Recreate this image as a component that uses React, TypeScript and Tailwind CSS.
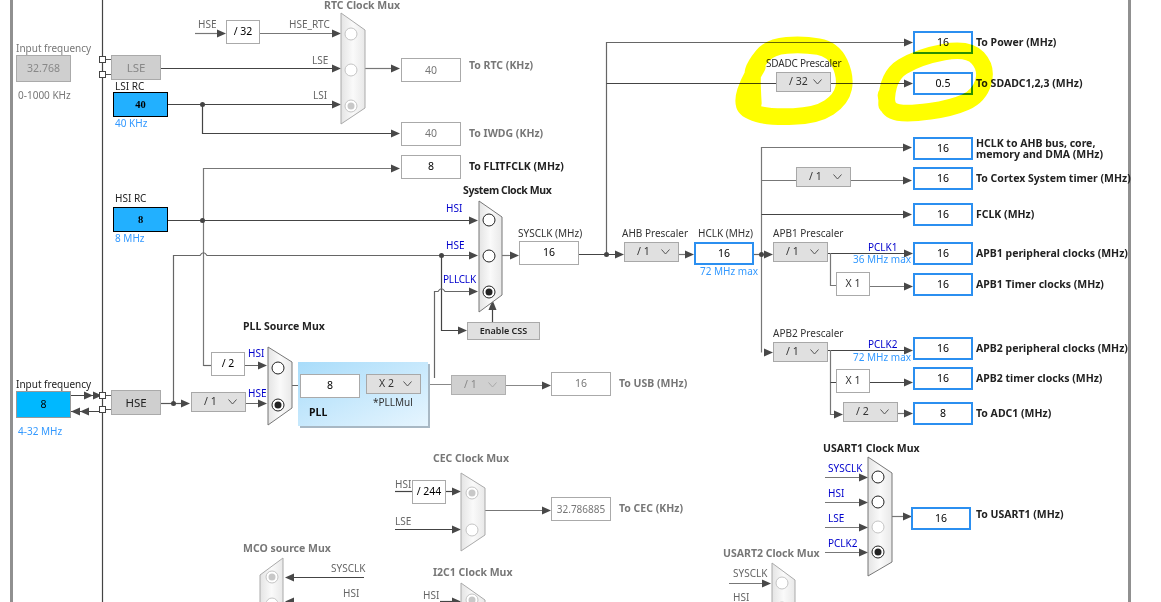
import type { ReactNode } from "react";

// wires: [path, colour]
const wires: [string, string][] = [
  ["M102.5 0V602", "#444"],
  // RTC
  ["M195 33.5H218", "#777"],
  ["M259 33.5H332", "#777"],
  ["M161 68.5H332", "#444"],
  ["M168 104.5H332M202.5 104.5V133.5H392", "#444"],
  ["M365 68.5H392", "#777"],
  ["M203.5 366V168.5H392", "#777"],
  // HSI / HSE
  ["M168 220.5H469", "#444"],
  ["M173.5 403V255.5H200Q203.5 250 207 255.5H469", "#666"],
  ["M441.5 255.5V330.5H458", "#444"],
  ["M434.5 378V291.5H438Q441.5 286 445 291.5H469", "#666"],
  ["M492.5 322V310", "#444"],
  ["M71 395.5H102M71 411.5H102", "#444"],
  ["M105 395.5H111M105 409.5H111", "#555"],
  ["M105 59.5H111M105 74.5H111", "#555"],
  ["M161 403.5H182", "#555"],
  ["M203.5 365.5H211", "#666"],
  ["M244 365.5H259M246 403.5H259", "#666"],
  ["M292 385.5H300M359 385.5H366", "#666"],
  ["M423 384.5H451M506 385.5H543", "#888"],
  // system clock
  ["M502 255.5H510", "#777"],
  ["M579 254.5H615", "#444"],
  ["M606.5 254V42.5H904", "#666"],
  ["M606.5 83.5H776M830 83.5H904", "#444"],
  ["M679 254.5H686", "#777"],
  ["M753 254.5H765", "#666"],
  ["M761.5 352.5V147.5H904", "#777"],
  ["M761.5 180.5H796M851 180.5H904", "#777"],
  ["M761.5 214.5H904", "#444"],
  ["M828 253.5H904", "#444"],
  ["M830.5 253V285.5H836", "#777"],
  ["M869 286.5H904", "#777"],
  ["M828 350.5H904", "#444"],
  ["M830.5 350V414.5H835", "#777"],
  ["M830.5 382.5H836M869 382.5H904", "#444"],
  ["M898 413.5H904", "#777"],
  // lower muxes
  ["M395 491.5H412", "#444"],
  ["M446 491.5H452", "#444"],
  ["M395 529.5H452", "#444"],
  ["M485 510.5H542", "#777"],
  ["M825 477.5H860M825 502.5H860M825 527.5H860", "#777"],
  ["M825 552.5H860", "#777"],
  ["M892 516.5H903", "#777"],
  ["M729 583.5H763", "#777"],
  ["M440 601.5H452", "#444"],
  ["M364 577.5H292", "#444"],
];

// arrow tips pointing right
const arrows = [
  [226, 33], [341, 33], [341, 68], [341, 104], [400, 68], [400, 133], [400, 168],
  [478, 220], [478, 255], [478, 291], [467, 330], [93, 395], [102, 395], [190, 403], [267, 365], [267, 403],
  [519, 255], [624, 254], [694, 254], [773, 254], [913, 42], [913, 83], [912, 147], [912, 180], [912, 214],
  [913, 253], [913, 286], [773, 352], [913, 350], [913, 382], [843, 414], [913, 413], [461, 491], [461, 529],
  [551, 510], [868, 477], [868, 502], [868, 527], [868, 552], [912, 516], [771, 583], [461, 601], [551, 385],
];

const leftArrows = [[71, 411], [80, 411], [285, 577], [285, 601]];

const dots = [[202.5, 104.5], [202.5, 220.5], [173.5, 403.5], [441.5, 255.5], [606.5, 254.5], [761.5, 254.5]];

const squares = [[99, 56], [99, 71], [99, 392], [99, 406]];

type Mux = { p: string; on: boolean; c: [number, number, 0 | 1][] };

const muxes: Mux[] = [
  { p: "341,13 365,30 365,108 341,124", on: false, c: [[351, 34, 0], [351, 70, 0], [351, 106, 1]] },
  { p: "479,201 502,217 502,295 479,312", on: true, c: [[489, 220, 0], [489, 256, 0], [489, 292, 1]] },
  { p: "268,347 292,362 292,408 268,425", on: true, c: [[278, 368, 0], [278, 405, 1]] },
  { p: "461,473 485,488 485,535 461,551", on: false, c: [[472, 493, 1], [472, 530, 0]] },
  { p: "868,457 892,473 892,562 868,576", on: true, c: [[878, 477, 0], [878, 502, 0], [878, 552, 1]] },
  { p: "461,583 485,600 485,640 461,660", on: false, c: [[472, 600, 1]] },
  { p: "283,558 260,575 260,640 283,660", on: false, c: [[272, 577, 1], [272, 604, 0]] },
  { p: "772,563 795,580 795,640 772,660", on: false, c: [[782, 583, 0], [782, 608, 0]] },
];

function Label({ className, children }: { className: string; children: ReactNode }) {
  return <div className={`absolute whitespace-nowrap text-[10px] leading-[14px] ${className}`}>{children}</div>;
}

function Title({ className, children }: { className: string; children: ReactNode }) {
  return <div className={`absolute whitespace-nowrap text-[10.5px] leading-[14px] font-bold ${className}`}>{children}</div>;
}

function Box({ className, children }: { className: string; children: ReactNode }) {
  return <div className={`absolute flex items-center justify-center border text-[10.5px] ${className}`}>{children}</div>;
}

// blue framed value with its caption on the right
function Output({ className, value, children }: { className: string; value: string; children: ReactNode }) {
  return (
    <div className={`absolute flex items-center gap-[3px] ${className}`}>
      <div className="flex h-[23px] w-[60px] items-center justify-center border-2 border-[#2b8ff0] bg-white text-[10.5px] text-black">{value}</div>
      <div className="whitespace-nowrap text-[10.5px] font-bold leading-[11px] text-[#222]">{children}</div>
    </div>
  );
}

// grey framed value with a caption, used by the gated outputs
function Tap({ className, value, muted, raised, children }: { className: string; value: string; muted?: boolean; raised?: boolean; children: ReactNode }) {
  return (
    <div className={`absolute flex items-center gap-[8px] ${className}`}>
      <div className={`flex h-[24px] w-[60px] items-center justify-center border border-[#aaa] bg-white ${value.length > 4 ? "text-[10px]" : "text-[10.5px]"} ${muted ? "text-[#777]" : "text-black"}`}>{value}</div>
      <div className={`whitespace-nowrap text-[10.5px] font-bold ${raised ? "mb-[9px]" : ""} ${muted ? "text-[#777]" : "text-[#222]"}`}>{children}</div>
    </div>
  );
}

function Select({ className, children, off }: { className: string; children: ReactNode; off?: boolean }) {
  return (
    <div className={`absolute flex h-[20px] w-[55px] items-center justify-between border pl-[12px] pr-[8px] text-[10.5px] ${off ? "border-[#b0b0b0] bg-[#d0d0d0] text-[#888]" : "border-[#a8a8a8] bg-[#e0e0e0] text-[#333]"} ${className}`}>
      <span>{children}</span>
      <svg width="9" height="6" viewBox="0 0 9 6" fill="none" stroke={off ? "#aaa" : "#555"}>
        <path d="M.5 .5L4.5 5L8.5 .5" />
      </svg>
    </div>
  );
}

// frequency source: caption, coloured box, range below
function Source({ className, title, value, range, box, titleColor, rangeColor }: { className: string; title: string; value: string; range: string; box: string; titleColor: string; rangeColor: string }) {
  return (
    <div className={`absolute flex flex-col ${className}`}>
      <div className={`whitespace-nowrap text-[10px] leading-[14px] ${titleColor}`}>{title}</div>
      <div className={`flex h-[27px] w-[55px] items-center justify-center border text-[10.5px] ${box}`}>{value}</div>
      <div className={`ml-[2px] mt-[6px] whitespace-nowrap text-[10px] leading-[14px] ${rangeColor}`}>{range}</div>
    </div>
  );
}

// smooth line through the points, for the marker scribbles
function smooth(pts: number[][]) {
  let d = `M${pts[0][0]} ${pts[0][1]}`;
  for (let i = 1; i < pts.length - 1; i++) {
    const mx = (pts[i][0] + pts[i + 1][0]) / 2;
    const my = (pts[i][1] + pts[i + 1][1]) / 2;
    d += `Q${pts[i][0]} ${pts[i][1]} ${mx} ${my}`;
  }
  const last = pts[pts.length - 1];
  return `${d}L${last[0]} ${last[1]}`;
}

const scribbleA = [[100, 250], [95, 170], [105, 135], [150, 80], [250, 72], [340, 88], [378, 170], [364, 238], [290, 287], [150, 292], [78, 272], [68, 240], [84, 190], [112, 140]];
const scribbleB = [[500, 255], [498, 170], [598, 110], [745, 83], [802, 145], [778, 228], [695, 265], [565, 283], [505, 272], [498, 225]];

export default function App() {
  return (
    <div className="relative h-[602px] w-[1161px] overflow-hidden bg-white font-['Noto_Sans','Liberation_Sans',sans-serif] text-[#222]">
      {/* frame */}
      <div className="absolute bottom-0 left-[10px] top-0 w-[3px] bg-[#909090]" />
      <div className="absolute bottom-0 left-[1128px] top-0 w-[3px] bg-[#909090]" />

      <svg className="absolute left-0 top-0 h-[602px] w-[1161px]" viewBox="0 0 1161 602" fill="none">
        <defs>
          <linearGradient id="mux" x1="0" x2="1" y1="0" y2="0">
            <stop offset="0" stopColor="#e4e4e4" />
            <stop offset="0.5" stopColor="#fafafa" />
            <stop offset="1" stopColor="#e8e8e8" />
          </linearGradient>
        </defs>
        {wires.map(([d, c], i) => (
          <path key={i} d={d} stroke={c} strokeWidth="1.2" />
        ))}
        {arrows.map(([x, y], i) => (
          <path key={i} d={`M${x} ${y + 0.5}L${x - 9} ${y - 3.5}V${y + 4.5}Z`} fill="#484848" />
        ))}
        {leftArrows.map(([x, y], i) => (
          <path key={i} d={`M${x} ${y + 0.5}L${x + 9} ${y - 3.5}V${y + 4.5}Z`} fill="#484848" />
        ))}
        <path d="M492.5 300L488.5 310H496.5Z" fill="#484848" />
        {dots.map(([x, y], i) => (
          <circle key={i} cx={x} cy={y} r="2.5" fill="#444" />
        ))}
        {squares.map(([x, y], i) => (
          <rect key={i} x={x + 0.5} y={y + 0.5} width="6" height="6" fill="white" stroke="#444" />
        ))}
        {muxes.map((m, i) => (
          <g key={i}>
            <polygon points={m.p} fill="url(#mux)" stroke={m.on ? "#777" : "#aaa"} />
            {m.c.map(([x, y, sel], j) => (
              <g key={j}>
                <circle cx={x} cy={y} r="6" fill="white" stroke={m.on ? "#222" : "#c4c4c4"} />
                {sel === 1 && <circle cx={x} cy={y} r="3.5" fill={m.on ? "#222" : "#c8c8c8"} />}
              </g>
            ))}
          </g>
        ))}
        <circle cx="878" cy="527" r="6" fill="white" stroke="#c4c4c4" />
      </svg>

      {/* sources */}
      <Source className="left-[16px] top-[41px]" title="Input frequency" value="32.768" range="0-1000 KHz" box="border-[#aaa] bg-[#cfcfcf] text-[#888]" titleColor="text-[#777]" rangeColor="text-[#777]" />
      <Source className="left-[16px] top-[377px]" title="Input frequency" value="8" range="4-32 MHz" box="border-[#999] bg-[#00b8ff] text-black" titleColor="text-[#222]" rangeColor="text-[#3399ff]" />
      <Box className="left-[111px] top-[55px] h-[25px] w-[50px] border-[#aaa] bg-[#cfcfcf] text-[11.5px] text-[#888]">LSE</Box>
      <Label className="left-[115px] top-[79px] text-[#222]">LSI RC</Label>
      <Box className="left-[113px] top-[92px] h-[25px] w-[55px] border-black bg-[#22b0ff] font-['Liberation_Serif',serif] font-bold text-black">40</Box>
      <Label className="left-[115px] top-[116px] text-[#3399ff]">40 KHz</Label>
      <Label className="left-[115px] top-[191px] text-[#222]">HSI RC</Label>
      <Box className="left-[113px] top-[207px] h-[25px] w-[55px] border-black bg-[#22b0ff] font-['Liberation_Serif',serif] font-bold text-black">8</Box>
      <Label className="left-[115px] top-[231px] text-[#3399ff]">8 MHz</Label>
      <Box className="left-[111px] top-[390px] h-[25px] w-[50px] border-[#aaa] bg-[#cfcfcf] text-[11.5px] text-[#222]">HSE</Box>

      {/* RTC */}
      <div className="absolute left-[324px] top-0 whitespace-nowrap text-[10.5px] font-bold leading-[10px] text-[#777]">RTC Clock Mux</div>
      <Label className="left-[198px] top-[17px] text-[#666]">HSE</Label>
      <Box className="left-[226px] top-[20px] h-[24px] w-[34px] border-[#aaa] bg-white text-black">/ 32</Box>
      <Label className="left-[289px] top-[17px] text-[#666]">HSE_RTC</Label>
      <Label className="left-[312px] top-[53px] text-[#666]">LSE</Label>
      <Label className="left-[313px] top-[88px] text-[#666]">LSI</Label>
      <Tap className="left-[401px] top-[58px]" value="40" muted raised>To RTC (KHz)</Tap>
      <Tap className="left-[401px] top-[122px]" value="40" muted>To IWDG (KHz)</Tap>
      <Tap className="left-[401px] top-[155px]" value="8">To FLITFCLK (MHz)</Tap>

      {/* PLL */}
      <Title className="left-[243px] top-[319px] text-[#222]">PLL Source Mux</Title>
      <Box className="left-[211px] top-[352px] h-[24px] w-[34px] border-[#aaa] bg-white text-black">/ 2</Box>
      <Label className="left-[248px] top-[346px] text-[#0000cc]">HSI</Label>
      <Label className="left-[248px] top-[386px] text-[#0000cc]">HSE</Label>
      <Select className="left-[191px] top-[392px]">/ 1</Select>
      <div className="absolute left-[298px] top-[362px] h-[64px] w-[130px] bg-gradient-to-br from-[#a8dcfa] to-[#e6f5fe] shadow-[2px_2px_0_#a8b8c4]" />
      <Box className="left-[300px] top-[374px] h-[24px] w-[60px] border-[#aaa] bg-white text-black">8</Box>
      <Select className="left-[366px] top-[374px]">X 2</Select>
      <Label className="left-[373px] top-[395px] text-[#333]">*PLLMul</Label>
      <Title className="left-[309px] top-[405px] text-[#111]">PLL</Title>
      <Select off className="left-[451px] top-[375px]">/ 1</Select>
      <Tap className="left-[551px] top-[372px]" value="16" muted>To USB (MHz)</Tap>

      {/* system clock */}
      <Title className="left-[463px] top-[183px] tracking-[-0.4px] text-[#222]">System Clock Mux</Title>
      <Label className="left-[446px] top-[201px] text-[#0000cc]">HSI</Label>
      <Label className="left-[446px] top-[238px] text-[#0000cc]">HSE</Label>
      <Label className="left-[443px] top-[272px] tracking-[-0.2px] text-[#0000cc]">PLLCLK</Label>
      <Box className="left-[467px] top-[322px] h-[18px] w-[73px] border-[#aaa] bg-[#e0e0e0] font-semibold text-[#222]"><span className="text-[9px]">Enable CSS</span></Box>
      <Label className="left-[518px] top-[226px] text-[#333]">SYSCLK (MHz)</Label>
      <Box className="left-[519px] top-[241px] h-[24px] w-[60px] border-[#aaa] bg-white text-black">16</Box>
      <Label className="left-[622px] top-[226px] text-[#333]">AHB Prescaler</Label>
      <Select className="left-[624px] top-[242px]">/ 1</Select>
      <Label className="left-[698px] top-[226px] text-[#333]">HCLK (MHz)</Label>
      <div className="absolute left-[694px] top-[242px] flex h-[23px] w-[60px] items-center justify-center border-2 border-[#2b8ff0] bg-white text-[10.5px] text-black">16</div>
      <Label className="left-[700px] top-[264px] text-[#3399ff]">72 MHz max</Label>

      {/* outputs */}
      <Label className="left-[766px] top-[56px] tracking-[-0.2px] text-[#333]">SDADC Prescaler</Label>
      <Select className="left-[776px] top-[72px]">/ 32</Select>
      <Select className="left-[796px] top-[167px]">/ 1</Select>
      <Output className="left-[913px] top-[31px]" value="16">To Power (MHz)</Output>
      <Output className="left-[913px] top-[72px]" value="0.5">To SDADC1,2,3 (MHz)</Output>
      <Output className="left-[913px] top-[137px]" value="16">HCLK to AHB bus, core,<br />memory and DMA (MHz)</Output>
      <Output className="left-[913px] top-[167px]" value="16">To Cortex System timer (MHz)</Output>
      <Output className="left-[913px] top-[203px]" value="16">FCLK (MHz)</Output>

      <Label className="left-[773px] top-[226px] text-[#333]">APB1 Prescaler</Label>
      <Select className="left-[773px] top-[242px]">/ 1</Select>
      <Label className="left-[868px] top-[240px] text-[#0000cc]">PCLK1</Label>
      <Label className="left-[853px] top-[252px] text-[#3399ff]">36 MHz max</Label>
      <Output className="left-[913px] top-[242px]" value="16">APB1 peripheral clocks (MHz)</Output>
      <Box className="left-[836px] top-[272px] h-[24px] w-[34px] border-[#aaa] bg-white text-[#333]">X 1</Box>
      <Output className="left-[913px] top-[273px]" value="16">APB1 Timer clocks (MHz)</Output>

      <Label className="left-[773px] top-[326px] text-[#333]">APB2 Prescaler</Label>
      <Select className="left-[773px] top-[342px]">/ 1</Select>
      <Label className="left-[868px] top-[337px] text-[#0000cc]">PCLK2</Label>
      <Label className="left-[853px] top-[350px] text-[#3399ff]">72 MHz max</Label>
      <Output className="left-[913px] top-[337px]" value="16">APB2 peripheral clocks (MHz)</Output>
      <Box className="left-[836px] top-[369px] h-[24px] w-[34px] border-[#aaa] bg-white text-[#333]">X 1</Box>
      <Output className="left-[913px] top-[367px]" value="16">APB2 timer clocks (MHz)</Output>
      <Select className="left-[843px] top-[402px]">/ 2</Select>
      <Output className="left-[913px] top-[402px]" value="8">To ADC1 (MHz)</Output>

      {/* bottom muxes */}
      <Title className="left-[433px] top-[451px] text-[#777]">CEC Clock Mux</Title>
      <Label className="left-[395px] top-[477px] text-[#666]">HSI</Label>
      <Box className="left-[412px] top-[480px] h-[24px] w-[34px] border-[#aaa] bg-white text-black">/ 244</Box>
      <Label className="left-[395px] top-[514px] text-[#666]">LSE</Label>
      <Tap className="left-[551px] top-[497px]" value="32.786885" muted>To CEC (KHz)</Tap>
      <Title className="left-[433px] top-[565px] text-[#777]">I2C1 Clock Mux</Title>
      <Label className="left-[423px] top-[588px] text-[#666]">HSI</Label>
      <Title className="left-[243px] top-[541px] text-[#777]">MCO source Mux</Title>
      <Label className="left-[331px] top-[561px] text-[#666]">SYSCLK</Label>
      <Label className="left-[343px] top-[586px] text-[#666]">HSI</Label>
      <Title className="left-[823px] top-[441px] text-[#222]">USART1 Clock Mux</Title>
      <Label className="left-[828px] top-[461px] text-[#0000cc]">SYSCLK</Label>
      <Label className="left-[828px] top-[486px] text-[#0000cc]">HSI</Label>
      <Label className="left-[828px] top-[511px] text-[#0000cc]">LSE</Label>
      <Label className="left-[828px] top-[536px] text-[#0000cc]">PCLK2</Label>
      <div className="absolute left-[911px] top-[507px] flex items-center gap-[5px]">
        <div className="flex h-[23px] w-[60px] items-center justify-center border-2 border-[#2b8ff0] bg-white text-[10.5px] text-black">16</div>
        <div className="mb-[7px] whitespace-nowrap text-[10.5px] font-bold text-[#222]">To USART1 (MHz)</div>
      </div>
      <Title className="left-[723px] top-[546px] text-[#777]">USART2 Clock Mux</Title>
      <Label className="left-[733px] top-[566px] text-[#666]">SYSCLK</Label>
      <div className="absolute left-[733px] top-[593px] whitespace-nowrap text-[10px] leading-[9px] text-[#666]">HSI</div>

      {/* highlighter marks */}
      <svg className="absolute left-0 top-0 h-[602px] w-[1161px] mix-blend-multiply" viewBox="0 0 1161 602" fill="none">
        <g transform="translate(720 20) scale(.3333)" stroke="#ffff00" strokeWidth="50" strokeLinecap="round" strokeLinejoin="round">
          <path d={smooth(scribbleA)} />
          <path d={smooth(scribbleB)} />
        </g>
      </svg>
    </div>
  );
}
